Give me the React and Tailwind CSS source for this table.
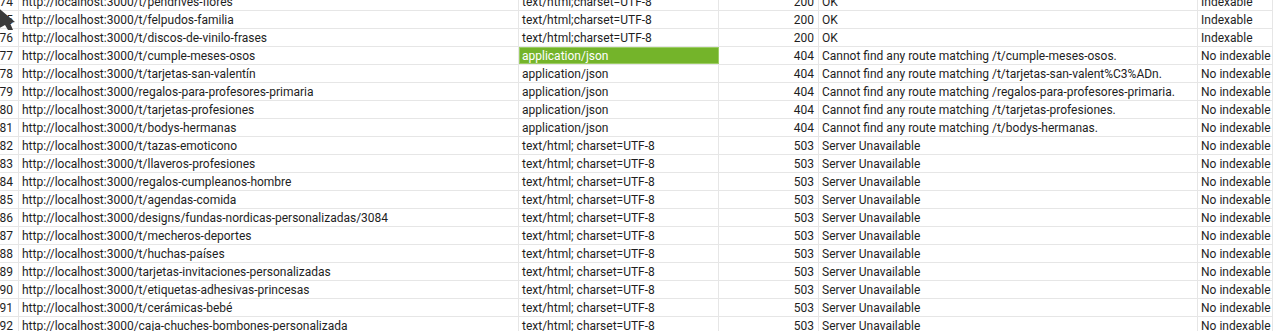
import React from "react";

const rows = [
  ["74", "http://localhost:3000/t/pendrives-flores", "text/html;charset=UTF-8", "200", "OK", "Indexable"],
  ["75", "http://localhost:3000/t/felpudos-familia", "text/html;charset=UTF-8", "200", "OK", "Indexable"],
  ["76", "http://localhost:3000/t/discos-de-vinilo-frases", "text/html;charset=UTF-8", "200", "OK", "Indexable"],
  ["77", "http://localhost:3000/t/cumple-meses-osos", "application/json", "404", "Cannot find any route matching /t/cumple-meses-osos.", "No indexable", true],
  ["78", "http://localhost:3000/t/tarjetas-san-valentín", "application/json", "404", "Cannot find any route matching /t/tarjetas-san-valent%C3%ADn.", "No indexable"],
  ["79", "http://localhost:3000/regalos-para-profesores-primaria", "application/json", "404", "Cannot find any route matching /regalos-para-profesores-primaria.", "No indexable"],
  ["80", "http://localhost:3000/t/tarjetas-profesiones", "application/json", "404", "Cannot find any route matching /t/tarjetas-profesiones.", "No indexable"],
  ["81", "http://localhost:3000/t/bodys-hermanas", "application/json", "404", "Cannot find any route matching /t/bodys-hermanas.", "No indexable"],
  ["82", "http://localhost:3000/t/tazas-emoticono", "text/html; charset=UTF-8", "503", "Server Unavailable", "No indexable"],
  ["83", "http://localhost:3000/t/llaveros-profesiones", "text/html; charset=UTF-8", "503", "Server Unavailable", "No indexable"],
  ["84", "http://localhost:3000/regalos-cumpleanos-hombre", "text/html; charset=UTF-8", "503", "Server Unavailable", "No indexable"],
  ["85", "http://localhost:3000/t/agendas-comida", "text/html; charset=UTF-8", "503", "Server Unavailable", "No indexable"],
  ["86", "http://localhost:3000/designs/fundas-nordicas-personalizadas/3084", "text/html; charset=UTF-8", "503", "Server Unavailable", "No indexable"],
  ["87", "http://localhost:3000/t/mecheros-deportes", "text/html; charset=UTF-8", "503", "Server Unavailable", "No indexable"],
  ["88", "http://localhost:3000/t/huchas-países", "text/html; charset=UTF-8", "503", "Server Unavailable", "No indexable"],
  ["89", "http://localhost:3000/tarjetas-invitaciones-personalizadas", "text/html; charset=UTF-8", "503", "Server Unavailable", "No indexable"],
  ["90", "http://localhost:3000/t/etiquetas-adhesivas-princesas", "text/html; charset=UTF-8", "503", "Server Unavailable", "No indexable"],
  ["91", "http://localhost:3000/t/cerámicas-bebé", "text/html; charset=UTF-8", "503", "Server Unavailable", "No indexable"],
  ["92", "http://localhost:3000/caja-chuches-bombones-personalizada", "text/html; charset=UTF-8", "503", "Server Unavailable", "No indexable"],
];

function Row({ r }) {
  const [n, url, ct, code, status, idx, sel] = r;
  const base = "h-[18px] border-b border-[#e6e6e6] overflow-hidden whitespace-nowrap";
  const cell = `${base} border-r pt-[2px] leading-[15px]`;
  return (
    <div className="flex">
      <div className={`${cell} w-[19px] shrink-0 flex justify-end pr-[5px]`}>
        <span className="shrink-0">{"1" + n}</span>
      </div>
      <div className={`${cell} w-[500px] shrink-0 pl-[3px]`}>{url}</div>
      {sel ? (
        <div className={`${base} w-[200px] shrink-0 bg-[#74b42a]`}>
          <div className="h-full w-full border border-[#9ccd64] text-white pt-[1px] pl-[2px] leading-[15px]">{ct}</div>
        </div>
      ) : (
        <div className={`${cell} w-[200px] shrink-0 pl-[3px]`}>{ct}</div>
      )}
      <div className={`${cell} w-[100px] shrink-0 text-right pr-[4px]`}>{code}</div>
      <div className={`${cell} w-[379px] shrink-0 pl-[3px]`}>{status}</div>
      <div className={`${cell} flex-1 pl-[3px]`}>{idx}</div>
    </div>
  );
}

export default function App() {
  return (
    <div className="relative w-[1273px] h-[331px] overflow-hidden bg-white text-[12px] text-[#1e1e1e]" style={{ fontFamily: "Roboto, 'Liberation Sans', sans-serif" }}>
      <div className="-mt-[7px]">
        {rows.map((r) => (
          <Row key={r[0]} r={r} />
        ))}
      </div>
      <svg className="absolute left-0 top-[6px]" width="20" height="24" viewBox="0 0 20 24">
        <path d="M-4 0 L15 16 L10 17 L13 24 L8 24 L5 19 L-4 24 Z" fill="#3a3a3a" />
      </svg>
    </div>
  );
}
